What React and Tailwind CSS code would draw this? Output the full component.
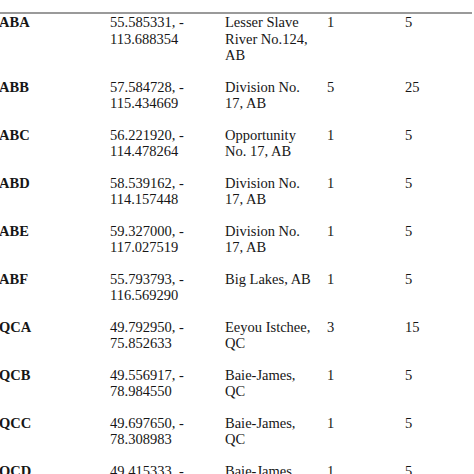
const rows = [
  ['ABA', ['55.585331, -', '113.688354'], ['Lesser Slave', 'River No.124,', 'AB'], '1', '5'],
  ['ABB', ['57.584728, -', '115.434669'], ['Division No.', '17, AB'], '5', '25'],
  ['ABC', ['56.221920, -', '114.478264'], ['Opportunity', 'No. 17, AB'], '1', '5'],
  ['ABD', ['58.539162, -', '114.157448'], ['Division No.', '17, AB'], '1', '5'],
  ['ABE', ['59.327000, -', '117.027519'], ['Division No.', '17, AB'], '1', '5'],
  ['ABF', ['55.793793, -', '116.569290'], ['Big Lakes, AB'], '1', '5'],
  ['QCA', ['49.792950, -', '75.852633'], ['Eeyou Istchee,', 'QC'], '3', '15'],
  ['QCB', ['49.556917, -', '78.984550'], ['Baie-James,', 'QC'], '1', '5'],
  ['QCC', ['49.697650, -', '78.308983'], ['Baie-James,', 'QC'], '1', '5'],
  ['QCD', ['49.415333, -', '78.000000'], ['Baie-James,', 'QC'], '1', '5'],
]

export default function App() {
  return (
    <div
      className="w-[474px] h-[474px] overflow-hidden bg-white text-[#161616] text-[14.5px] leading-[16.5px]"
      style={{ fontFamily: '"Liberation Serif", "Times New Roman", serif' }}
    >
      <div className="h-[12px]" />
      <div className="w-[472px] border-t-2 border-[#9a9a9a]" />
      {rows.map(([code, coords, place, a, b]) => (
        <div key={code} className="grid grid-cols-[110px_115px_102px_78px_1fr] pb-[15px]">
          <div className="font-bold -ml-px">{code}</div>
          <div>{coords.map(l => <div key={l}>{l}</div>)}</div>
          <div>{place.map(l => <div key={l}>{l}</div>)}</div>
          <div>{a}</div>
          <div>{b}</div>
        </div>
      ))}
    </div>
  )
}
